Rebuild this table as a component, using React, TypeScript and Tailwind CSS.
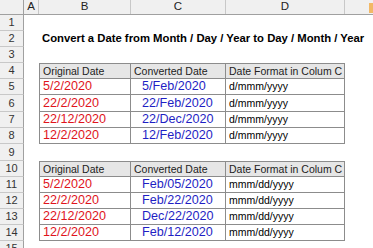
import React from "react";

type Row = {
  n: number;
  h: string;
  kind: "blank" | "title" | "head" | "data";
  cells?: [string, string, string];
};

const table1: [string, string, string][] = [
  ["5/2/2020", "5/Feb/2020", "d/mmm/yyyy"],
  ["22/2/2020", "22/Feb/2020", "d/mmm/yyyy"],
  ["22/12/2020", "22/Dec/2020", "d/mmm/yyyy"],
  ["12/2/2020", "12/Feb/2020", "d/mmm/yyyy"],
];

const table2: [string, string, string][] = [
  ["5/2/2020", "Feb/05/2020", "mmm/dd/yyyy"],
  ["22/2/2020", "Feb/22/2020", "mmm/dd/yyyy"],
  ["22/12/2020", "Dec/22/2020", "mmm/dd/yyyy"],
  ["12/2/2020", "Feb/12/2020", "mmm/dd/yyyy"],
];

const rows: Row[] = [
  { n: 1, h: "h-[16px]", kind: "blank" },
  { n: 2, h: "h-[16px]", kind: "title" },
  { n: 3, h: "h-[16px]", kind: "blank" },
  { n: 4, h: "h-[16px]", kind: "head" },
  { n: 5, h: "h-[16px]", kind: "data", cells: table1[0] },
  { n: 6, h: "h-[17px]", kind: "data", cells: table1[1] },
  { n: 7, h: "h-[16px]", kind: "data", cells: table1[2] },
  { n: 8, h: "h-[16px]", kind: "data", cells: table1[3] },
  { n: 9, h: "h-[17px]", kind: "blank" },
  { n: 10, h: "h-[16px]", kind: "head" },
  { n: 11, h: "h-[16px]", kind: "data", cells: table2[0] },
  { n: 12, h: "h-[16px]", kind: "data", cells: table2[1] },
  { n: 13, h: "h-[16px]", kind: "data", cells: table2[2] },
  { n: 14, h: "h-[16px]", kind: "data", cells: table2[3] },
  { n: 15, h: "h-[16px]", kind: "blank" },
];

const font = "font-['Liberation_Sans','Arial',sans-serif]";

const RowHeader = ({ n }: { n: number }) => (
  <div className="w-[24px] shrink-0 h-full flex items-center justify-center bg-[#f0f0f0] border-r border-r-[#a0a0a0] border-b border-b-[#c8c8c8] text-[11px] text-[#333]">
    {n}
  </div>
);

const SheetRow = ({ row }: { row: Row }) => {
  if (row.kind === "title") {
    return (
      <div className={`flex ${row.h}`}>
        <RowHeader n={row.n} />
        <div className="w-[15px] shrink-0" />
        <div className="flex items-center pl-[3px] whitespace-nowrap text-[11.3px] font-bold text-black">
          Convert a Date from Month / Day / Year to Day / Month / Year
        </div>
      </div>
    );
  }
  if (row.kind === "head") {
    return (
      <div className={`flex ${row.h}`}>
        <RowHeader n={row.n} />
        <div className="w-[15px] shrink-0" />
        <div className="w-[92px] shrink-0 flex items-center pl-[3px] bg-[#e6e6e6] border border-[#8c8c8c] text-[10.5px] text-[#222]">
          Original Date
        </div>
        <div className="w-[95px] shrink-0 flex items-center pl-[3px] bg-[#e6e6e6] border-y border-r border-[#8c8c8c] text-[10.5px] text-[#222]">
          Converted Date
        </div>
        <div className="w-[119px] shrink-0 flex items-center pl-[3px] bg-[#e6e6e6] border-y border-r border-[#8c8c8c] text-[10.5px] text-[#222]">
          Date Format in Colum C
        </div>
      </div>
    );
  }
  if (row.kind === "data" && row.cells) {
    const [orig, conv, fmt] = row.cells;
    return (
      <div className={`flex ${row.h}`}>
        <RowHeader n={row.n} />
        <div className="w-[15px] shrink-0" />
        <div className="w-[92px] shrink-0 flex items-center pl-[3px] border-l border-b border-r border-[#8c8c8c] text-[12.6px] text-[#e0141c]">
          {orig}
        </div>
        <div className="w-[95px] shrink-0 flex items-center pl-[11px] border-b border-r border-[#8c8c8c] text-[12.6px] text-[#1f1fc4]">
          {conv}
        </div>
        <div className="w-[119px] shrink-0 flex items-center pl-[3px] border-b border-r border-[#8c8c8c] text-[10.5px] text-black">
          {fmt}
        </div>
      </div>
    );
  }
  return (
    <div className={`flex ${row.h}`}>
      <RowHeader n={row.n} />
    </div>
  );
};

export default function App() {
  return (
    <div className={`w-[373px] h-[248px] overflow-hidden bg-white ${font} leading-none`}>
      {/* column headers */}
      <div className="flex h-[15px] bg-[#f0f0f0] border-b border-b-[#a0a0a0] text-[11.5px] text-[#222]">
        <div className="w-[24px] shrink-0 border-r border-[#a0a0a0]" />
        <div className="w-[15px] shrink-0 flex items-center justify-center border-r border-[#c8c8c8]">A</div>
        <div className="w-[92px] shrink-0 flex items-center justify-center border-r border-[#c8c8c8]">B</div>
        <div className="w-[95px] shrink-0 flex items-center justify-center border-r border-[#c8c8c8]">C</div>
        <div className="w-[119px] shrink-0 flex items-center justify-center border-r border-[#c8c8c8]">D</div>
        <div className="flex-1 flex justify-end items-start pt-[3px]">
          <div className="w-[4px] h-[10px] bg-[#f2b866]" />
        </div>
      </div>
      {rows.map((row) => (
        <SheetRow key={row.n} row={row} />
      ))}
    </div>
  );
}
